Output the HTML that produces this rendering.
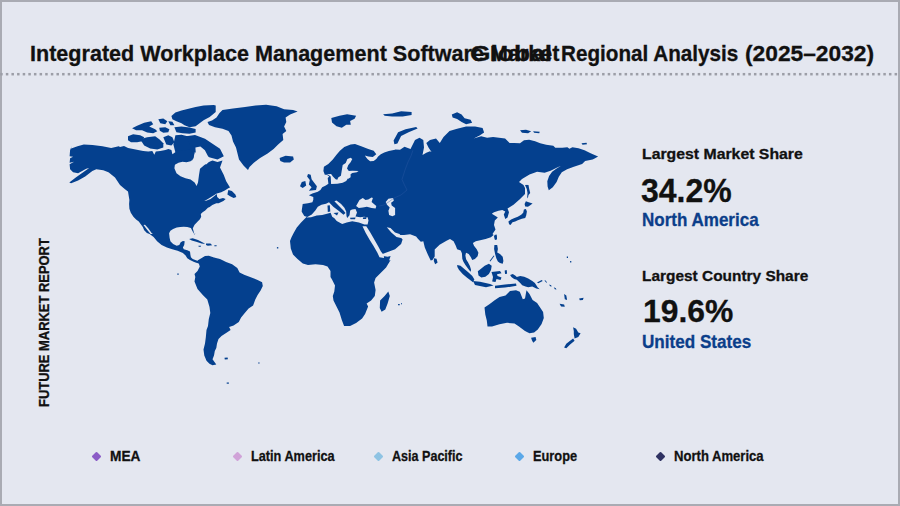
<!DOCTYPE html>
<html><head><meta charset="utf-8">
<style>
html,body{margin:0;padding:0;}
body{width:900px;height:506px;overflow:hidden;position:relative;background:#e4e7f0;font-family:"Liberation Sans",sans-serif;}
#frame{position:absolute;left:0;top:0;width:896px;height:502px;border:2px solid #a9abb3;}
.t{position:absolute;white-space:nowrap;font-weight:bold;line-height:1;transform-origin:0 0;-webkit-text-stroke:0.3px currentColor;}
#dots{position:absolute;left:1px;top:74.2px;width:897px;height:3px;background-image:radial-gradient(circle,#a6a8b0 1.0px,rgba(166,168,176,0) 1.5px);background-size:4.5px 3px;}
.dia{position:absolute;width:7px;height:7px;transform:rotate(45deg);border-radius:1px;}
</style></head><body>
<div id="frame"></div>
<svg width="900" height="506" style="position:absolute;left:0;top:0"><g fill="#9c9ea7"><rect x="0.20" y="72.95" width="2.5" height="2.5"/><rect x="5.83" y="72.95" width="2.5" height="2.5"/><rect x="11.45" y="72.95" width="2.5" height="2.5"/><rect x="17.07" y="72.95" width="2.5" height="2.5"/><rect x="22.70" y="72.95" width="2.5" height="2.5"/><rect x="28.32" y="72.95" width="2.5" height="2.5"/><rect x="33.95" y="72.95" width="2.5" height="2.5"/><rect x="39.58" y="72.95" width="2.5" height="2.5"/><rect x="45.20" y="72.95" width="2.5" height="2.5"/><rect x="50.83" y="72.95" width="2.5" height="2.5"/><rect x="56.45" y="72.95" width="2.5" height="2.5"/><rect x="62.08" y="72.95" width="2.5" height="2.5"/><rect x="67.70" y="72.95" width="2.5" height="2.5"/><rect x="73.33" y="72.95" width="2.5" height="2.5"/><rect x="78.95" y="72.95" width="2.5" height="2.5"/><rect x="84.58" y="72.95" width="2.5" height="2.5"/><rect x="90.20" y="72.95" width="2.5" height="2.5"/><rect x="95.83" y="72.95" width="2.5" height="2.5"/><rect x="101.45" y="72.95" width="2.5" height="2.5"/><rect x="107.08" y="72.95" width="2.5" height="2.5"/><rect x="112.70" y="72.95" width="2.5" height="2.5"/><rect x="118.33" y="72.95" width="2.5" height="2.5"/><rect x="123.95" y="72.95" width="2.5" height="2.5"/><rect x="129.57" y="72.95" width="2.5" height="2.5"/><rect x="135.20" y="72.95" width="2.5" height="2.5"/><rect x="140.82" y="72.95" width="2.5" height="2.5"/><rect x="146.45" y="72.95" width="2.5" height="2.5"/><rect x="152.07" y="72.95" width="2.5" height="2.5"/><rect x="157.70" y="72.95" width="2.5" height="2.5"/><rect x="163.32" y="72.95" width="2.5" height="2.5"/><rect x="168.95" y="72.95" width="2.5" height="2.5"/><rect x="174.57" y="72.95" width="2.5" height="2.5"/><rect x="180.20" y="72.95" width="2.5" height="2.5"/><rect x="185.82" y="72.95" width="2.5" height="2.5"/><rect x="191.45" y="72.95" width="2.5" height="2.5"/><rect x="197.07" y="72.95" width="2.5" height="2.5"/><rect x="202.70" y="72.95" width="2.5" height="2.5"/><rect x="208.32" y="72.95" width="2.5" height="2.5"/><rect x="213.95" y="72.95" width="2.5" height="2.5"/><rect x="219.57" y="72.95" width="2.5" height="2.5"/><rect x="225.20" y="72.95" width="2.5" height="2.5"/><rect x="230.82" y="72.95" width="2.5" height="2.5"/><rect x="236.45" y="72.95" width="2.5" height="2.5"/><rect x="242.07" y="72.95" width="2.5" height="2.5"/><rect x="247.70" y="72.95" width="2.5" height="2.5"/><rect x="253.32" y="72.95" width="2.5" height="2.5"/><rect x="258.95" y="72.95" width="2.5" height="2.5"/><rect x="264.57" y="72.95" width="2.5" height="2.5"/><rect x="270.20" y="72.95" width="2.5" height="2.5"/><rect x="275.82" y="72.95" width="2.5" height="2.5"/><rect x="281.45" y="72.95" width="2.5" height="2.5"/><rect x="287.07" y="72.95" width="2.5" height="2.5"/><rect x="292.70" y="72.95" width="2.5" height="2.5"/><rect x="298.32" y="72.95" width="2.5" height="2.5"/><rect x="303.95" y="72.95" width="2.5" height="2.5"/><rect x="309.57" y="72.95" width="2.5" height="2.5"/><rect x="315.20" y="72.95" width="2.5" height="2.5"/><rect x="320.82" y="72.95" width="2.5" height="2.5"/><rect x="326.45" y="72.95" width="2.5" height="2.5"/><rect x="332.07" y="72.95" width="2.5" height="2.5"/><rect x="337.70" y="72.95" width="2.5" height="2.5"/><rect x="343.32" y="72.95" width="2.5" height="2.5"/><rect x="348.95" y="72.95" width="2.5" height="2.5"/><rect x="354.57" y="72.95" width="2.5" height="2.5"/><rect x="360.20" y="72.95" width="2.5" height="2.5"/><rect x="365.82" y="72.95" width="2.5" height="2.5"/><rect x="371.45" y="72.95" width="2.5" height="2.5"/><rect x="377.07" y="72.95" width="2.5" height="2.5"/><rect x="382.70" y="72.95" width="2.5" height="2.5"/><rect x="388.32" y="72.95" width="2.5" height="2.5"/><rect x="393.95" y="72.95" width="2.5" height="2.5"/><rect x="399.57" y="72.95" width="2.5" height="2.5"/><rect x="405.20" y="72.95" width="2.5" height="2.5"/><rect x="410.82" y="72.95" width="2.5" height="2.5"/><rect x="416.45" y="72.95" width="2.5" height="2.5"/><rect x="422.07" y="72.95" width="2.5" height="2.5"/><rect x="427.70" y="72.95" width="2.5" height="2.5"/><rect x="433.32" y="72.95" width="2.5" height="2.5"/><rect x="438.95" y="72.95" width="2.5" height="2.5"/><rect x="444.57" y="72.95" width="2.5" height="2.5"/><rect x="450.20" y="72.95" width="2.5" height="2.5"/><rect x="455.82" y="72.95" width="2.5" height="2.5"/><rect x="461.45" y="72.95" width="2.5" height="2.5"/><rect x="467.07" y="72.95" width="2.5" height="2.5"/><rect x="472.70" y="72.95" width="2.5" height="2.5"/><rect x="478.32" y="72.95" width="2.5" height="2.5"/><rect x="483.95" y="72.95" width="2.5" height="2.5"/><rect x="489.57" y="72.95" width="2.5" height="2.5"/><rect x="495.20" y="72.95" width="2.5" height="2.5"/><rect x="500.82" y="72.95" width="2.5" height="2.5"/><rect x="506.45" y="72.95" width="2.5" height="2.5"/><rect x="512.08" y="72.95" width="2.5" height="2.5"/><rect x="517.70" y="72.95" width="2.5" height="2.5"/><rect x="523.33" y="72.95" width="2.5" height="2.5"/><rect x="528.95" y="72.95" width="2.5" height="2.5"/><rect x="534.58" y="72.95" width="2.5" height="2.5"/><rect x="540.20" y="72.95" width="2.5" height="2.5"/><rect x="545.83" y="72.95" width="2.5" height="2.5"/><rect x="551.45" y="72.95" width="2.5" height="2.5"/><rect x="557.08" y="72.95" width="2.5" height="2.5"/><rect x="562.70" y="72.95" width="2.5" height="2.5"/><rect x="568.33" y="72.95" width="2.5" height="2.5"/><rect x="573.95" y="72.95" width="2.5" height="2.5"/><rect x="579.58" y="72.95" width="2.5" height="2.5"/><rect x="585.20" y="72.95" width="2.5" height="2.5"/><rect x="590.83" y="72.95" width="2.5" height="2.5"/><rect x="596.45" y="72.95" width="2.5" height="2.5"/><rect x="602.08" y="72.95" width="2.5" height="2.5"/><rect x="607.70" y="72.95" width="2.5" height="2.5"/><rect x="613.33" y="72.95" width="2.5" height="2.5"/><rect x="618.95" y="72.95" width="2.5" height="2.5"/><rect x="624.58" y="72.95" width="2.5" height="2.5"/><rect x="630.20" y="72.95" width="2.5" height="2.5"/><rect x="635.83" y="72.95" width="2.5" height="2.5"/><rect x="641.45" y="72.95" width="2.5" height="2.5"/><rect x="647.08" y="72.95" width="2.5" height="2.5"/><rect x="652.70" y="72.95" width="2.5" height="2.5"/><rect x="658.33" y="72.95" width="2.5" height="2.5"/><rect x="663.95" y="72.95" width="2.5" height="2.5"/><rect x="669.58" y="72.95" width="2.5" height="2.5"/><rect x="675.20" y="72.95" width="2.5" height="2.5"/><rect x="680.83" y="72.95" width="2.5" height="2.5"/><rect x="686.45" y="72.95" width="2.5" height="2.5"/><rect x="692.08" y="72.95" width="2.5" height="2.5"/><rect x="697.70" y="72.95" width="2.5" height="2.5"/><rect x="703.33" y="72.95" width="2.5" height="2.5"/><rect x="708.95" y="72.95" width="2.5" height="2.5"/><rect x="714.58" y="72.95" width="2.5" height="2.5"/><rect x="720.20" y="72.95" width="2.5" height="2.5"/><rect x="725.83" y="72.95" width="2.5" height="2.5"/><rect x="731.45" y="72.95" width="2.5" height="2.5"/><rect x="737.08" y="72.95" width="2.5" height="2.5"/><rect x="742.70" y="72.95" width="2.5" height="2.5"/><rect x="748.33" y="72.95" width="2.5" height="2.5"/><rect x="753.95" y="72.95" width="2.5" height="2.5"/><rect x="759.58" y="72.95" width="2.5" height="2.5"/><rect x="765.20" y="72.95" width="2.5" height="2.5"/><rect x="770.83" y="72.95" width="2.5" height="2.5"/><rect x="776.45" y="72.95" width="2.5" height="2.5"/><rect x="782.08" y="72.95" width="2.5" height="2.5"/><rect x="787.70" y="72.95" width="2.5" height="2.5"/><rect x="793.33" y="72.95" width="2.5" height="2.5"/><rect x="798.95" y="72.95" width="2.5" height="2.5"/><rect x="804.58" y="72.95" width="2.5" height="2.5"/><rect x="810.20" y="72.95" width="2.5" height="2.5"/><rect x="815.83" y="72.95" width="2.5" height="2.5"/><rect x="821.45" y="72.95" width="2.5" height="2.5"/><rect x="827.08" y="72.95" width="2.5" height="2.5"/><rect x="832.70" y="72.95" width="2.5" height="2.5"/><rect x="838.33" y="72.95" width="2.5" height="2.5"/><rect x="843.95" y="72.95" width="2.5" height="2.5"/><rect x="849.58" y="72.95" width="2.5" height="2.5"/><rect x="855.20" y="72.95" width="2.5" height="2.5"/><rect x="860.83" y="72.95" width="2.5" height="2.5"/><rect x="866.45" y="72.95" width="2.5" height="2.5"/><rect x="872.08" y="72.95" width="2.5" height="2.5"/><rect x="877.70" y="72.95" width="2.5" height="2.5"/><rect x="883.33" y="72.95" width="2.5" height="2.5"/><rect x="888.95" y="72.95" width="2.5" height="2.5"/><rect x="894.58" y="72.95" width="2.5" height="2.5"/></g></svg>
<div class="t" id="t1" style="left:30.46px;top:44.09px;font-size:21.5px;color:#111;transform:scaleX(1.0034);">Integrated Workplace Management Software Market</div>
<div class="t" id="t2" style="left:469.77px;top:44.09px;font-size:21.5px;color:#111;transform:scaleX(1.2267);">Global</div>
<div class="t" id="t2b" style="left:561.04px;top:44.09px;font-size:21.5px;color:#111;transform:scaleX(0.9617);">Regional Analysis</div>
<div class="t" id="t2c" style="left:744.94px;top:44.09px;font-size:21.5px;color:#111;transform:scaleX(1.0583);">(2025–2032)</div>
<svg id="map" width="900" height="506" style="position:absolute;left:0;top:0" viewBox="0 0 900 506">
<path fill="#04408e" d="M70.5,148.8 L77.5,146.2 L83.8,144.5 L92.5,145.0 L102.5,146.2 L111.2,148.0 L118.8,146.2 L120.0,147.1 L124.0,146.1 L128.1,148.1 L133.1,149.1 L138.1,150.1 L143.2,151.1 L148.2,151.6 L152.3,151.1 L154.3,154.7 L155.8,151.6 L160.3,151.1 L165.4,150.1 L168.4,149.1 L171.4,150.1 L172.4,154.2 L174.9,152.6 L177.0,151.1 L179.0,155.2 L181.0,158.2 L184.5,159.2 L188.5,155.2 L190.6,150.1 L192.6,148.1 L194.6,152.1 L193.6,158.2 L190.6,161.2 L186.5,162.2 L182.5,161.7 L178.5,162.7 L174.9,164.7 L174.4,168.3 L176.5,173.3 L180.5,176.3 L185.5,178.3 L190.6,179.4 L194.6,182.4 L196.6,186.0 L198.0,182.5 L199.0,175.0 L200.0,168.8 L203.8,165.5 L207.5,162.5 L212.5,160.5 L217.5,162.0 L222.5,160.5 L220.0,167.5 L223.8,175.0 L226.2,181.2 L230.0,187.5 L228.3,188.2 L224.8,190.4 L221.2,192.2 L216.8,193.6 L212.3,196.2 L207.9,198.9 L204.3,201.1 L206.1,200.8 L210.6,198.9 L214.1,196.2 L216.8,194.0 L217.2,197.1 L219.4,198.9 L223.0,198.0 L225.7,198.9 L223.4,201.1 L218.6,203.3 L216.3,203.2 L212.3,205.1 L209.7,206.9 L207.9,207.8 L205.2,210.4 L202.6,212.2 L200.8,214.0 L201.2,216.7 L199.9,219.3 L197.2,222.0 L194.6,224.7 L193.7,226.4 L192.8,228.2 L193.7,231.8 L194.6,235.0 L195.3,233.3 L194.4,234.2 L192.7,231.6 L190.9,228.0 L187.3,227.1 L183.8,226.7 L180.2,227.1 L176.7,227.6 L173.1,228.9 L170.4,230.7 L169.1,233.3 L169.6,237.8 L170.4,241.3 L173.1,244.0 L176.7,245.8 L179.3,244.9 L180.7,242.2 L182.9,240.9 L184.7,241.3 L184.2,244.9 L182.9,247.6 L183.8,249.3 L187.3,250.2 L190.0,251.6 L190.4,254.7 L190.9,257.3 L192.7,259.1 L195.3,260.0 L198.0,260.9 L199.8,261.8 L198.9,263.6 L196.2,262.7 L193.6,261.8 L190.0,260.0 L187.3,258.2 L185.6,255.6 L182.9,252.9 L177.6,250.7 L172.2,249.3 L166.9,247.6 L161.6,244.9 L157.1,241.3 L153.6,236.9 L149.6,234.0 L146.9,232.9 L144.2,230.2 L142.8,226.9 L140.8,224.2 L138.8,221.5 L136.1,219.5 L133.4,216.8 L130.8,212.8 L129.4,208.7 L129.1,204.0 L129.4,200.0 L128.0,191.5 L125.0,189.3 L120.0,185.0 L115.0,177.5 L108.8,172.5 L108.4,172.3 L103.3,170.3 L96.3,169.3 L92.3,171.1 L85.2,176.5 L78.1,180.6 L71.1,183.2 L69.3,182.4 L76.1,177.3 L83.2,172.3 L89.2,168.1 L86.2,168.8 L78.1,173.3 L73.1,172.3 L70.1,169.3 L69.6,164.2 L74.1,161.7 L69.6,162.7 L70.1,158.2 L73.1,156.7 L69.6,156.2 L70.1,150.1 L72.1,146.1Z"/>
<path fill="#e4e7f0" d="M143.5,225.0 L145.0,224.7 L148.2,228.2 L151.6,232.9 L152.9,234.0 L150.6,234.0 L146.9,229.6Z"/>
<path fill="#04408e" d="M228.3,190.0 L231.9,190.9 L235.4,194.4 L236.3,197.1 L233.7,198.0 L230.1,196.2 L227.4,194.4Z"/>
<path fill="#04408e" d="M189.1,239.1 L192.7,238.2 L198.0,240.0 L203.3,242.7 L205.1,244.0 L201.6,243.6 L196.2,241.8 L191.8,240.4Z"/>
<path fill="#04408e" d="M206.0,243.6 L210.4,243.6 L212.2,245.3 L207.8,245.8 L206.0,244.9Z"/>
<path fill="#04408e" d="M198.4,245.8 L201.1,245.8 L200.7,246.7 L198.7,246.7Z"/>
<path fill="#04408e" d="M214.4,245.3 L216.7,245.3 L216.5,246.2 L214.4,246.2Z"/>
<path fill="#04408e" d="M171.4,116.1 L175.4,112.6 L181.5,110.6 L187.5,109.1 L195.6,107.1 L203.6,105.5 L213.7,105.0 L215.7,105.5 L215.7,112.1 L209.7,117.1 L203.6,120.2 L199.6,123.2 L195.6,126.2 L189.5,127.2 L184.5,125.2 L181.5,123.2 L176.4,121.2 L172.4,119.2Z"/>
<path fill="#04408e" d="M158.3,119.2 L163.3,118.6 L167.3,121.2 L165.3,124.2 L160.3,123.2Z"/>
<path fill="#04408e" d="M168.3,121.2 L172.4,121.7 L174.4,125.2 L170.4,125.2Z"/>
<path fill="#04408e" d="M174.4,127.2 L181.5,126.4 L189.5,127.4 L195.6,129.0 L195.6,132.5 L189.5,133.8 L182.5,133.3 L176.4,132.3Z"/>
<path fill="#04408e" d="M132.1,128.2 L137.1,125.7 L144.2,122.7 L151.2,121.2 L153.2,124.2 L149.2,126.4 L155.2,129.2 L157.3,131.2 L153.2,133.3 L147.2,132.5 L142.1,130.2 L136.1,130.2Z"/>
<path fill="#04408e" d="M159.3,127.7 L165.3,127.2 L169.4,129.2 L168.3,132.3 L163.3,132.8 L159.8,130.7Z"/>
<path fill="#04408e" d="M128.0,136.3 L133.1,134.3 L140.1,135.3 L144.2,137.3 L142.1,141.3 L137.1,142.3 L131.0,142.3 L128.0,140.3Z"/>
<path fill="#04408e" d="M140.1,139.3 L147.2,137.3 L155.2,136.3 L159.3,139.3 L163.3,143.3 L163.3,147.4 L157.3,149.4 L150.2,148.4 L144.2,145.4Z"/>
<path fill="#04408e" d="M163.3,137.3 L168.3,135.3 L172.4,137.3 L174.4,142.3 L171.4,145.4 L166.3,144.4Z"/>
<path fill="#04408e" d="M175.4,135.3 L181.5,134.8 L187.5,136.3 L193.5,137.3 L199.6,138.3 L205.6,141.3 L211.7,145.4 L215.7,148.4 L215.7,152.4 L175.4,152.4 L173.4,144.4Z"/>
<path fill="#04408e" d="M186.2,136.2 L195.0,135.0 L205.0,138.8 L212.5,143.8 L220.0,148.8 L223.8,156.2 L217.5,159.5 L210.0,157.5 L203.8,155.0 L200.0,151.2 L196.2,147.5 L190.0,145.0Z"/>
<path fill="#04408e" d="M176.7,150.7 L190.3,149.7 L194.4,153.2 L192.3,160.2 L183.3,161.2 L177.2,159.2Z"/>
<path fill="#e4e7f0" d="M195.4,147.6 L200.4,146.6 L204.9,150.2 L207.5,155.2 L210.5,160.2 L206.5,164.3 L200.4,164.3 L197.4,161.2 L195.9,155.2Z"/>
<path fill="#04408e" d="M222.5,110.0 L233.0,108.5 L245.0,107.0 L255.6,105.5 L266.1,104.8 L276.6,106.3 L284.1,109.3 L293.1,110.0 L297.6,111.5 L290.1,114.5 L285.6,117.5 L286.3,122.0 L284.1,126.5 L286.3,131.0 L282.6,134.0 L283.3,140.0 L278.1,144.5 L273.6,149.1 L267.6,153.6 L260.1,158.1 L254.1,162.6 L249.5,167.1 L248.0,170.1 L243.5,165.6 L239.0,159.6 L237.5,153.6 L236.0,147.6 L233.0,141.5 L231.5,135.5 L228.5,131.0 L222.5,128.8 L215.0,127.3 L209.0,125.0 L207.5,122.0 L212.0,120.5 L216.5,117.5 L219.5,113.0Z"/>
<path fill="#04408e" d="M279.6,158.1 L285.6,155.8 L293.1,156.6 L293.8,159.6 L290.1,162.6 L284.1,162.6 L280.3,161.1Z"/>
<path fill="#04408e" d="M197.5,260.5 L201.3,258.3 L205.0,256.0 L208.8,255.7 L214.0,257.5 L220.0,259.0 L226.1,262.0 L232.1,264.3 L237.3,268.0 L239.6,272.5 L244.1,274.8 L250.1,277.0 L257.6,280.0 L262.1,282.3 L262.8,286.0 L260.6,290.5 L257.6,295.0 L255.3,299.5 L253.1,305.6 L248.6,308.6 L244.8,313.1 L241.1,317.6 L238.8,322.1 L233.6,325.5 L229.1,327.0 L230.6,330.0 L226.1,333.0 L221.5,336.0 L218.5,339.0 L217.0,343.5 L216.3,348.0 L214.8,351.1 L214.0,355.6 L212.5,359.3 L216.3,364.6 L212.5,365.3 L209.5,363.8 L206.5,360.8 L204.3,355.6 L203.5,349.5 L205.0,343.5 L205.8,337.5 L206.5,330.0 L208.0,326.0 L208.8,319.1 L210.3,313.1 L209.5,307.1 L207.3,299.5 L202.8,295.0 L197.5,289.0 L194.5,281.5 L195.3,277.0 L194.5,274.0 L197.5,271.0 L199.8,266.5 L198.3,262.0Z"/>
<path fill="#04408e" d="M224.5,357.8 L227.6,357.5 L227.9,359.3 L224.8,359.6Z"/>
<path fill="#04408e" d="M306.5,217.0 L301.3,222.3 L296.8,227.5 L293.8,232.8 L291.5,237.3 L290.0,241.0 L290.8,248.5 L293.0,254.5 L297.5,259.1 L302.8,263.6 L308.0,265.1 L315.5,264.3 L323.0,265.1 L327.5,266.6 L330.5,271.1 L330.5,277.1 L330.5,277.0 L332.0,279.5 L335.0,285.5 L334.3,291.5 L332.8,296.0 L333.5,300.5 L336.5,306.5 L339.5,312.6 L341.8,320.1 L344.1,326.1 L350.1,326.1 L356.1,323.1 L362.1,318.6 L365.1,314.1 L368.1,306.5 L366.6,303.5 L371.1,300.5 L374.8,296.0 L375.6,290.0 L374.1,282.5 L375.6,278.0 L380.1,273.5 L386.1,267.5 L390.6,260.0 L389.1,260.6 L390.6,256.1 L387.6,256.8 L383.1,256.1 L380.1,254.5 L383.1,253.8 L389.1,251.5 L395.1,249.3 L401.1,244.0 L402.6,239.5 L398.9,235.0 L404.1,235.0 L410.1,234.3 L416.1,236.5 L417.9,238.7 L420.8,241.7 L423.3,241.2 L424.8,247.6 L427.8,254.6 L430.7,260.5 L432.5,260.0 L434.7,256.5 L434.7,249.6 L439.6,244.7 L446.5,240.7 L450.0,239.0 L453.6,241.2 L455.8,245.7 L457.1,249.2 L460.7,250.6 L461.9,253.3 L462.3,258.8 L463.3,261.6 L465.4,265.1 L467.4,267.8 L469.5,270.6 L470.8,271.8 L471.0,269.6 L469.9,266.1 L468.1,262.6 L466.1,259.2 L465.4,255.4 L466.0,252.8 L468.7,254.1 L470.9,257.2 L472.2,259.9 L474.9,259.0 L477.6,256.3 L478.4,252.8 L476.7,249.2 L474.0,245.7 L472.9,243.0 L475.8,241.2 L480.2,240.3 L485.6,239.0 L490.9,237.2 L493.6,235.0 L492.5,234.1 L495.5,229.5 L494.0,225.0 L494.8,220.5 L497.8,217.5 L495.5,216.0 L491.8,213.8 L494.0,212.3 L498.5,210.8 L502.3,210.0 L505.3,211.5 L503.8,214.5 L505.3,219.0 L507.5,217.5 L509.0,212.3 L507.5,208.5 L513.5,204.8 L519.5,199.5 L525.0,194.1 L525.0,188.0 L523.5,185.0 L519.0,182.0 L522.0,179.0 L529.5,174.5 L537.1,171.8 L544.6,172.7 L550.6,170.8 L556.6,167.8 L561.1,165.8 L556.6,168.5 L552.1,171.8 L549.1,176.0 L547.3,181.3 L547.6,186.5 L548.8,190.3 L552.8,187.3 L556.6,182.0 L558.8,176.8 L561.8,172.3 L567.1,169.3 L573.1,167.0 L582.1,164.0 L585.1,161.0 L592.6,159.5 L594.6,158.4 L598.1,156.4 L594.6,154.9 L590.6,153.3 L584.5,150.3 L578.5,148.3 L572.4,147.3 L569.4,148.8 L567.4,147.3 L562.3,147.8 L555.3,147.8 L553.3,145.8 L546.2,144.8 L540.2,143.3 L535.1,141.2 L529.1,139.7 L524.0,140.2 L520.0,143.3 L514.1,143.0 L509.6,143.0 L505.1,138.5 L499.1,137.8 L493.1,137.0 L487.1,137.8 L481.1,136.3 L473.6,138.5 L479.6,135.5 L484.1,132.5 L482.6,128.0 L475.1,126.5 L466.1,126.5 L457.1,128.8 L449.5,131.0 L443.5,137.0 L439.8,143.0 L436.0,138.5 L430.0,140.0 L426.3,143.0 L428.5,147.6 L431.5,152.1 L430.0,151.3 L426.3,152.8 L422.5,155.1 L424.0,147.6 L423.3,140.0 L419.5,137.8 L415.0,140.0 L410.5,149.1 L404.5,146.8 L400.0,149.8 L395.1,149.5 L395.0,149.8 L388.8,151.1 L384.3,152.4 L380.8,154.2 L378.1,156.4 L376.3,159.1 L373.7,160.9 L370.1,161.3 L367.4,159.1 L364.8,155.6 L368.3,156.4 L372.8,156.9 L376.3,154.2 L373.7,150.7 L368.3,148.9 L361.2,146.2 L355.0,144.0 L350.6,144.4 L344.3,147.1 L339.9,150.7 L336.3,155.1 L332.8,159.6 L328.3,164.0 L323.9,166.7 L323.4,171.1 L324.8,174.7 L326.7,174.8 L329.3,176.4 L327.7,177.9 L328.4,183.7 L325.8,185.4 L322.2,187.2 L320.4,189.9 L317.8,191.7 L312.4,193.4 L308.9,195.2 L313.3,197.0 L313.3,199.7 L312.4,202.3 L308.0,203.2 L302.7,204.1 L301.8,210.0 L301.7,211.8 L304.3,215.9 L307.3,217.1Z"/>
<path fill="#e4e7f0" d="M307.3,217.1 L311.8,214.4 L315.5,210.3 L317.8,206.8 L321.5,204.7 L326.0,203.8 L329.0,202.3 L333.3,206.7 L338.9,211.1 L343.5,214.8 L345.5,213.0 L343.5,210.5 L339.0,206.0 L334.4,201.2 L336.5,200.6 L341.1,203.9 L344.4,207.8 L346.2,211.5 L346.5,216.0 L347.2,218.0 L349.5,215.2 L350.2,210.5 L352.0,209.5 L355.5,209.1 L357.0,212.5 L355.5,216.5 L360.2,217.2 L364.0,216.8 L367.6,217.2 L368.5,220.5 L367.6,224.6 L364.4,224.6 L358.9,222.5 L352.2,221.3 L346.7,222.4 L342.2,224.0 L336.7,221.1 L334.4,218.3 L332.2,216.7 L330.6,212.8 L328.9,213.3 L322.2,215.0 L316.7,215.6 L311.1,217.2 L306.5,217.5Z"/>
<path fill="#e4e7f0" d="M356.1,206.1 L359.5,200.1 L362.8,198.1 L365.5,200.1 L368.2,199.4 L371.6,197.4 L372.9,198.1 L371.6,202.1 L376.3,206.1 L375.6,208.5 L371.6,208.1 L366.9,206.8 L362.8,207.5 L358.8,208.1Z"/>
<path fill="#e4e7f0" d="M385.7,202.1 L388.4,198.7 L393.1,198.1 L393.8,200.8 L391.1,202.8 L391.7,205.5 L395.1,208.1 L395.1,214.9 L392.4,216.2 L389.1,214.9 L388.4,210.8 L389.7,207.5 L387.0,204.8Z"/>
<path fill="#e4e7f0" d="M362.5,226.3 L366.3,226.3 L370.3,232.5 L374.3,239.5 L378.3,246.5 L380.8,251.3 L383.8,255.3 L384.0,258.0 L379.5,257.2 L377.4,252.8 L373.4,245.8 L369.6,239.8 L365.6,232.8Z"/>
<path fill="#e4e7f0" d="M386.8,227.3 L390.5,228.0 L395.0,232.6 L399.5,234.1 L403.3,238.6 L396.5,237.1 L391.3,232.6Z"/>
<path fill="#e4e7f0" d="M326.7,174.3 L331.1,173.9 L332.9,176.6 L335.6,179.2 L337.3,179.7 L338.2,177.4 L340.9,175.7 L341.8,170.3 L342.7,165.0 L345.7,163.1 L347.4,159.1 L350.6,157.8 L352.3,159.1 L350.6,162.2 L348.3,164.9 L347.0,168.4 L348.8,171.1 L352.3,170.7 L358.6,171.1 L356.8,172.2 L352.3,173.1 L350.6,174.2 L350.6,177.3 L347.9,179.1 L348.0,178.3 L346.2,181.0 L342.7,182.8 L337.3,183.7 L331.1,184.1 L330.7,176.6 L329.3,175.5Z"/>
<path fill="#04408e" d="M226.7,382.5 L228.9,382.5 L228.9,383.7 L226.7,383.7Z"/>
<path fill="#04408e" d="M258.2,362.4 L259.6,362.4 L259.6,363.4 L258.2,363.4Z"/>
<path fill="#04408e" d="M177.3,273.6 L178.7,273.6 L178.7,274.8 L177.3,274.8Z"/>
<path fill="#04408e" d="M276.9,247.1 L278.3,247.1 L278.3,248.5 L276.9,248.5Z"/>
<path fill="#04408e" d="M398.1,304.1 L399.7,304.1 L399.7,305.3 L398.1,305.3Z"/>
<path fill="#04408e" d="M401.0,303.3 L402.0,303.3 L402.0,304.3 L401.0,304.3Z"/>
<path fill="#04408e" d="M327.5,205.5 L329.8,205.3 L330.3,211.5 L327.8,212.0Z"/>
<path fill="#04408e" d="M333.5,213.0 L338.5,212.6 L337.0,215.6Z"/>
<path fill="#04408e" d="M350.0,217.8 L355.6,217.6 L355.0,219.2 L350.5,219.2Z"/>
<path fill="#04408e" d="M362.8,217.4 L366.7,216.9 L366.0,218.9 L363.0,218.9Z"/>
<path fill="#04408e" d="M308.0,173.9 L310.7,174.8 L311.6,179.2 L314.2,182.8 L316.9,186.3 L316.0,189.9 L308.9,190.8 L311.6,187.2 L308.9,184.6 L309.8,180.1 L307.1,176.6Z"/>
<path fill="#04408e" d="M301.8,181.9 L305.3,181.0 L306.2,185.4 L302.7,188.1 L300.0,186.3Z"/>
<path fill="#04408e" d="M331.3,118.0 L339.5,115.8 L347.1,114.3 L356.1,115.8 L354.6,118.8 L350.1,121.0 L350.8,124.8 L346.3,124.8 L341.8,127.8 L336.5,126.3 L332.0,122.5Z"/>
<path fill="#04408e" d="M383.1,114.3 L392.1,113.5 L401.1,111.3 L411.6,112.0 L411.6,115.0 L402.6,116.5 L392.1,116.5 L384.6,115.8Z"/>
<path fill="#04408e" d="M393.6,140.5 L398.1,132.3 L405.6,129.3 L416.1,127.0 L417.6,128.5 L408.6,132.3 L401.1,136.0 L397.4,143.5 L394.4,144.3Z"/>
<path fill="#04408e" d="M451.8,114.5 L457.1,112.3 L461.6,114.5 L464.6,118.3 L470.6,119.8 L472.1,122.8 L466.1,124.3 L461.6,122.0 L457.1,119.0 L452.6,117.5Z"/>
<path fill="#04408e" d="M520.0,130.2 L526.0,129.7 L531.1,131.2 L528.1,133.2 L522.0,132.7Z"/>
<path fill="#04408e" d="M533.1,131.2 L539.7,131.7 L539.2,133.2 L534.1,132.7Z"/>
<path fill="#04408e" d="M581.5,143.3 L586.5,142.8 L587.0,144.3 L582.5,144.8Z"/>
<path fill="#04408e" d="M526.5,185.0 L528.5,185.0 L529.2,189.0 L530.2,193.1 L528.5,195.1 L527.8,198.4 L527.2,197.1 L527.5,193.1 L526.8,189.0 L525.0,185.0 L528.8,184.7Z"/>
<path fill="#04408e" d="M523.9,209.4 L525.9,209.1 L526.9,211.4 L526.2,215.5 L525.2,218.1 L521.9,218.8 L517.8,220.2 L515.2,221.5 L512.5,222.2 L510.5,224.9 L509.1,224.2 L508.4,221.5 L511.1,219.5 L514.5,218.1 L517.8,216.8 L521.2,214.8 L523.2,212.8Z"/>
<path fill="#04408e" d="M525.9,201.3 L527.9,202.0 L532.6,203.4 L529.9,205.4 L527.9,206.7 L525.2,206.4 L524.6,204.0Z"/>
<path fill="#04408e" d="M494.0,235.9 L496.7,235.6 L497.0,239.3 L494.8,239.3Z"/>
<path fill="#04408e" d="M434.0,258.3 L436.5,258.8 L437.6,262.5 L435.2,264.2 L433.8,261.0Z"/>
<path fill="#04408e" d="M380.1,300.5 L384.6,296.0 L388.3,291.5 L389.8,296.0 L387.6,303.5 L385.3,309.5 L381.6,311.8 L379.8,308.0Z"/>
<path fill="#04408e" d="M457.1,265.1 L460.5,265.7 L464.7,269.2 L468.8,272.7 L472.3,276.1 L474.4,279.6 L473.0,282.3 L466.8,277.5 L462.6,274.0 L459.1,269.9 L457.4,267.1Z"/>
<path fill="#04408e" d="M473.0,281.0 L480.0,281.8 L490.0,284.0 L493.5,285.5 L486.0,287.2 L475.0,285.0Z"/>
<path fill="#04408e" d="M477.8,271.3 L481.3,268.5 L484.7,265.7 L488.9,263.7 L491.7,265.7 L491.0,269.9 L488.9,274.0 L485.4,276.8 L481.3,277.5 L478.5,275.4Z"/>
<path fill="#04408e" d="M491.5,272.0 L500.0,271.0 L501.5,273.2 L497.0,274.3 L497.5,276.0 L501.5,277.5 L500.5,280.0 L496.5,279.0 L495.5,282.0 L492.2,281.5 L493.0,277.0Z"/>
<path fill="#04408e" d="M494.4,245.0 L497.2,245.0 L497.9,249.1 L497.2,252.6 L500.0,254.0 L502.7,256.8 L503.4,260.9 L502.7,263.7 L500.0,263.0 L497.9,261.6 L496.5,258.8 L495.1,254.0 L494.1,249.1Z"/>
<path fill="#04408e" d="M489.6,260.9 L493.7,255.4 L494.4,256.1 L490.3,261.6Z"/>
<path fill="#04408e" d="M494.4,235.0 L496.7,234.6 L496.7,239.4 L494.9,239.9Z"/>
<path fill="#04408e" d="M510.1,275.1 L512.8,274.1 L515.5,275.8 L516.8,277.1 L520.2,276.1 L524.2,276.8 L528.2,278.4 L532.3,281.1 L534.9,283.1 L537.6,287.2 L539.7,289.2 L536.3,288.5 L532.3,286.5 L528.2,287.2 L525.5,286.5 L522.2,285.2 L520.2,283.1 L516.8,279.8 L514.1,279.1 L511.4,277.1Z"/>
<path fill="#04408e" d="M537.0,282.5 L541.7,280.1 L542.7,281.1 L538.3,283.3Z"/>
<path fill="#04408e" d="M504.7,270.4 L506.7,270.0 L507.1,273.7 L505.0,274.1Z"/>
<path fill="#04408e" d="M544.4,280.5 L545.7,280.5 L547.0,282.5 L546.4,282.8Z"/>
<path fill="#04408e" d="M549.1,284.5 L551.1,285.2 L551.7,286.5 L550.1,286.2Z"/>
<path fill="#04408e" d="M553.8,287.2 L555.8,288.2 L556.5,289.5 L554.8,289.2Z"/>
<path fill="#04408e" d="M495.0,285.8 L505.0,284.6 L516.0,283.4 L516.5,285.8 L505.0,287.6 L495.0,288.2Z"/>
<path fill="#04408e" d="M484.5,307.6 L489.0,304.5 L495.0,300.0 L499.5,297.0 L505.5,295.5 L510.0,291.0 L516.0,290.3 L519.8,291.8 L521.3,295.5 L522.8,299.3 L525.0,298.5 L525.8,294.0 L526.5,290.3 L529.5,294.0 L532.6,300.0 L537.1,303.0 L540.1,307.6 L543.1,312.1 L543.8,318.1 L541.6,324.1 L538.6,328.6 L540.8,325.0 L537.8,329.5 L534.1,332.5 L529.5,333.3 L525.0,331.0 L522.0,328.8 L519.0,326.5 L514.5,323.5 L507.0,322.8 L499.5,324.3 L492.0,326.5 L487.5,326.5 L486.8,320.5 L485.3,314.5 L484.5,307.6Z"/>
<path fill="#04408e" d="M564.1,294.0 L566.3,295.5 L567.1,300.0 L564.8,299.3Z"/>
<path fill="#04408e" d="M559.6,303.8 L564.1,304.5 L564.8,306.8 L561.1,306.4Z"/>
<path fill="#04408e" d="M579.1,298.5 L583.6,297.8 L582.9,300.0 L579.8,300.3Z"/>
<path fill="#04408e" d="M566.8,256.5 L568.0,256.5 L568.0,258.0 L566.8,258.0Z"/>
<path fill="#04408e" d="M570.1,261.0 L571.3,261.0 L571.3,262.5 L570.1,262.5Z"/>
<path fill="#04408e" d="M531.1,337.8 L535.6,337.0 L536.3,340.0 L533.3,342.7 L531.8,340.0Z"/>
<path fill="#04408e" d="M573.1,327.3 L576.1,328.8 L578.3,332.5 L580.6,333.3 L578.3,337.0 L574.6,338.5 L573.8,334.0 L573.8,331.0Z"/>
<path fill="#04408e" d="M573.1,338.5 L574.6,340.8 L570.1,344.5 L566.3,348.3 L564.1,347.6 L566.3,343.8 L570.1,340.8Z"/>
<path id="ural" fill="none" stroke="#2b5aa3" stroke-width="0.7" stroke-opacity="0.6" d="M412.9,150.3 L411,156 L408,162 L405,170 L402,179.5 L404,184 L407,190 L401,195 L394,198 L390,201 L384,205 L379,206"/>
</svg>
<div class="t" id="r1" style="left:641.98px;top:145.54px;font-size:15.5px;color:#111;transform:scaleX(1.0200);">Largest Market Share</div>
<div class="t" id="r4" style="left:642.01px;top:267.54px;font-size:15.5px;color:#111;transform:scaleX(0.9949);">Largest Country Share</div>
<div class="t" id="r2" style="left:641.49px;top:173.57px;font-size:33px;color:#111;transform:scaleX(0.9696);">34.2%</div>
<div class="t" id="r5" style="left:642.63px;top:295.03px;font-size:32px;color:#111;transform:scaleX(0.9956);">19.6%</div>
<div class="t" id="r3" style="left:642.08px;top:210.57px;font-size:18.5px;color:#0b3e8a;transform:scaleX(0.9200);">North America</div>
<div class="t" id="r6" style="left:642.10px;top:332.29px;font-size:19px;color:#0b3e8a;transform:scaleX(0.9000);">United States</div>
<div class="t" id="v1" style="left:35.91px;top:406.76px;font-size:15.1px;color:#111;transform:rotate(-90deg) scaleX(0.8569);">FUTURE MARKET REPORT</div>
<div class="dia" style="left:93.00px;top:452.90px;background:#8b5cc7"></div>
<div class="t" id="l1" style="left:109.54px;top:447.84px;font-size:15.5px;color:#111;transform:scaleX(0.8827);">MEA</div>
<div class="dia" style="left:234.20px;top:452.90px;background:#d0a3d8"></div>
<div class="t" id="l2" style="left:250.52px;top:447.84px;font-size:15.5px;color:#111;transform:scaleX(0.8202);">Latin America</div>
<div class="dia" style="left:374.80px;top:452.90px;background:#8ec3e3"></div>
<div class="t" id="l3" style="left:392.38px;top:447.84px;font-size:15.5px;color:#111;transform:scaleX(0.8102);">Asia Pacific</div>
<div class="dia" style="left:516.20px;top:452.90px;background:#5ba8e8"></div>
<div class="t" id="l4" style="left:532.51px;top:447.84px;font-size:15.5px;color:#111;transform:scaleX(0.8264);">Europe</div>
<div class="dia" style="left:657.00px;top:452.90px;background:#2f3262"></div>
<div class="t" id="l5" style="left:673.57px;top:447.84px;font-size:15.5px;color:#111;transform:scaleX(0.8439);">North America</div>
</body></html>
